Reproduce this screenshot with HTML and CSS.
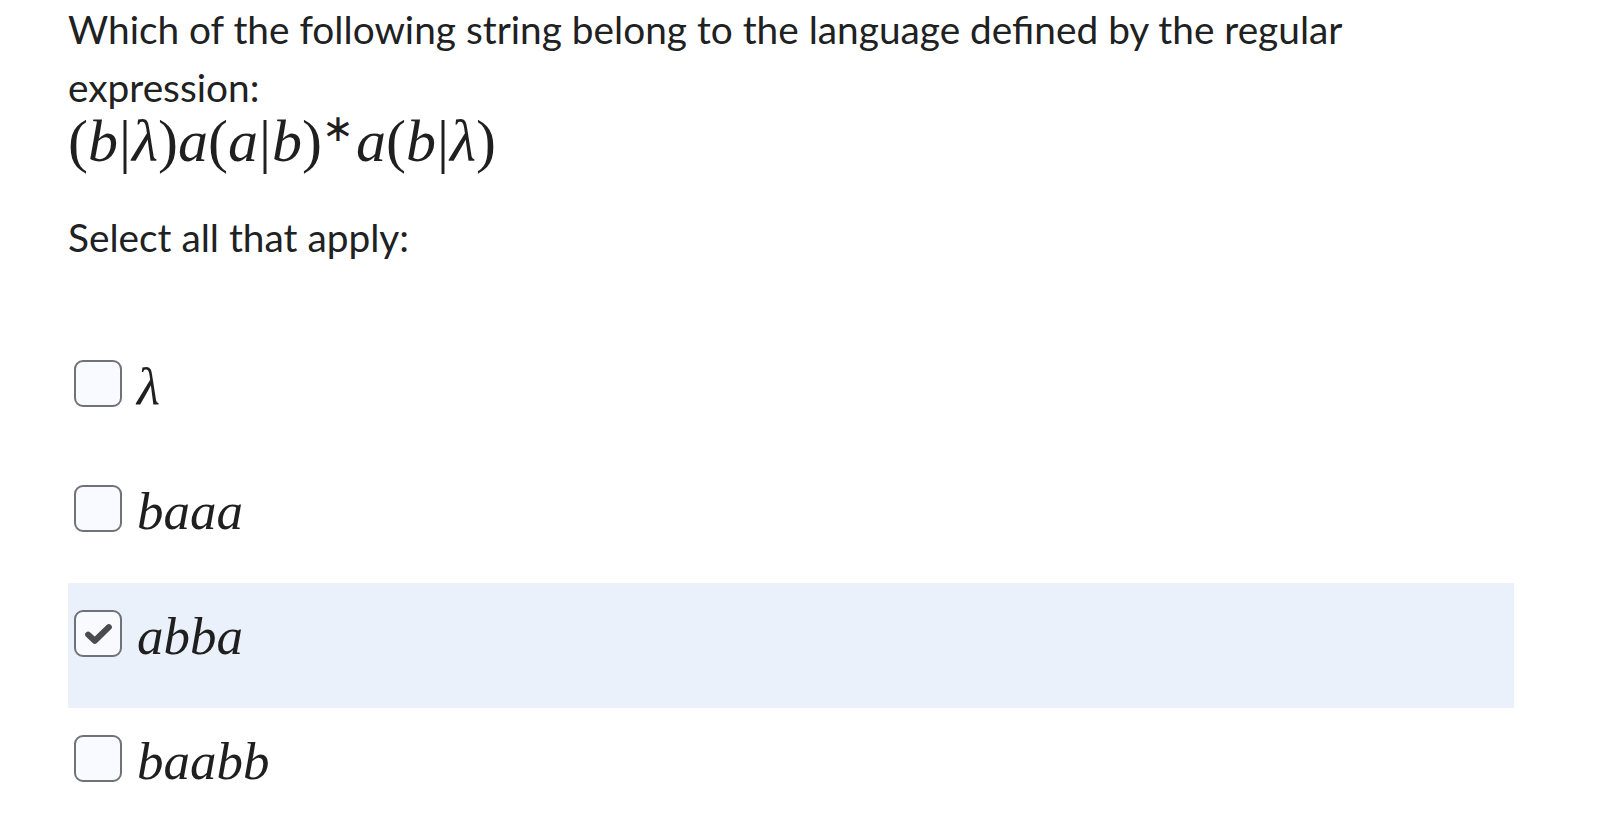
FILE: index.html
```html
<!DOCTYPE html>
<html lang="en">
<head>
<meta charset="utf-8">
<title>Question</title>
<link rel="stylesheet" href="styles.css">
</head>
<body>
<div class="question">
  <p class="prompt">Which of the following string belong to the language defined by the regular expression:</p>
  <div class="regex"><span class="up">(</span><i>b</i><span class="bar">|</span><i>λ</i><span class="up">)</span><i>a</i><span class="up">(</span><i>a</i><span class="bar">|</span><i>b</i><span class="up">)</span><sup class="star">∗</sup><i>a</i><span class="up">(</span><i>b</i><span class="bar">|</span><i>λ</i><span class="up">)</span></div>
  <p class="instr">Select all that apply:</p>
  <ul class="options">
    <li class="option">
      <span class="box"></span>
      <span class="label">λ</span>
    </li>
    <li class="option">
      <span class="box"></span>
      <span class="label">baaa</span>
    </li>
    <li class="option selected">
      <span class="box checked">
        <svg viewBox="0 0 24 24" width="33" height="33"><path d="M4.5 12.8l4.8 4.5L19.5 7.4" fill="none" stroke="#494c4e" stroke-width="4.4" stroke-linecap="round" stroke-linejoin="round"/></svg>
      </span>
      <span class="label">abba</span>
    </li>
    <li class="option">
      <span class="box"></span>
      <span class="label">baabb</span>
    </li>
  </ul>
</div>
</body>
</html>
```

FILE: styles.css
```css
html, body {
  margin: 0;
  padding: 0;
  background: #ffffff;
}
body {
  font-family: Lato, "Noto Sans", sans-serif;
  color: #202122;
}
.question {
  width: 1446px;
  padding: 0 0 0 68px;
}
.prompt {
  margin: 0;
  font-size: 38.8px;
  line-height: 58px;
}
.regex {
  font-family: "Liberation Serif", "Times New Roman", serif;
  font-size: 60px;
  line-height: 50px;
  height: 50px;
  margin-top: 0;
  white-space: nowrap;
  color: #1f1f1f;
}
.regex i {
  font-style: italic;
}
.regex .bar {
  margin: 0 1px;
}
.regex .star {
  font-size: 38px;
  vertical-align: 20px;
  line-height: 0;
  margin-right: 2px;
}
.instr {
  margin: 42px 0 0 0;
  font-size: 38.8px;
  line-height: 58px;
}
.options {
  list-style: none;
  margin: 67px 0 0 0;
  padding: 0;
}
.option {
  height: 125px;
  display: flex;
  align-items: flex-start;
  padding: 27px 0 0 6px;
  box-sizing: border-box;
}
.option.selected {
  background: #eaf1fb;
}
.box {
  width: 48px;
  height: 47px;
  box-sizing: border-box;
  border: 2px solid #6f7378;
  border-radius: 9px;
  background: #f8faff;
  display: flex;
  align-items: center;
  justify-content: center;
  flex: none;
}
.label {
  font-family: "Liberation Serif", "Times New Roman", serif;
  font-style: italic;
  font-size: 53px;
  line-height: 53px;
  margin-left: 15px;
  color: #1f1f1f;
}
```
